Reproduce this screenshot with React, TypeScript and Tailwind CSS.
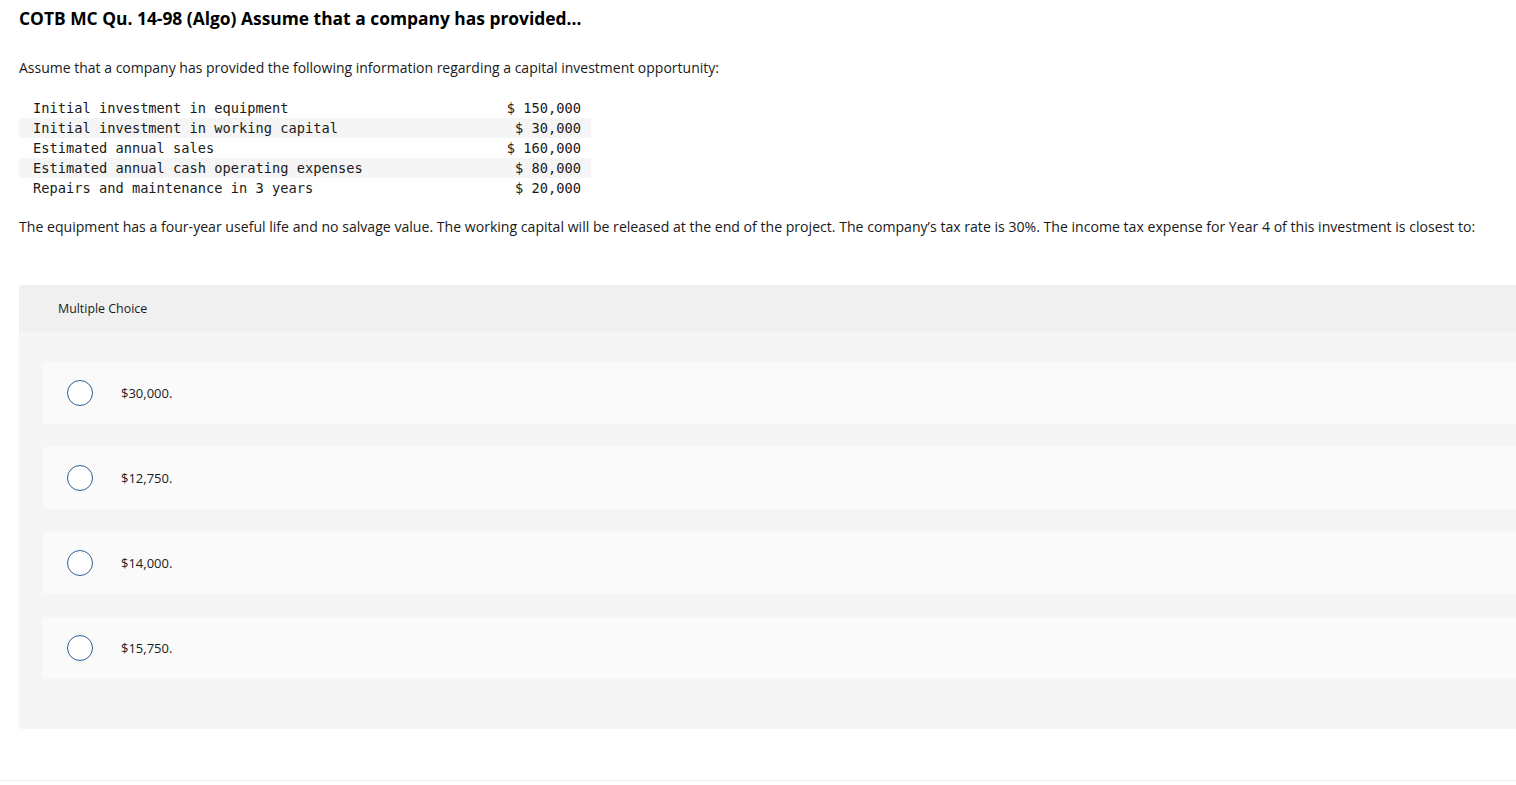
const rows = [
  { label: "Initial investment in equipment", value: "$ 150,000" },
  { label: "Initial investment in working capital", value: "$ 30,000" },
  { label: "Estimated annual sales", value: "$ 160,000" },
  { label: "Estimated annual cash operating expenses", value: "$ 80,000" },
  { label: "Repairs and maintenance in 3 years", value: "$ 20,000" },
];

const choices = ["$30,000.", "$12,750.", "$14,000.", "$15,750."];

export default function App() {
  return (
    <div className="min-h-screen bg-white text-[#1a1a1a] font-['Open_Sans',sans-serif]">
      <div className="pl-[19px]">
        <h1 className="pt-[7px] text-[17.4px] font-bold leading-[22px] text-black">
          COTB MC Qu. 14-98 (Algo) Assume that a company has provided...
        </h1>

        <p className="mt-[29px] text-[14px] leading-[20px]">
          Assume that a company has provided the following information regarding a capital investment opportunity:
        </p>

        <table className="mt-[20px] w-[572px] border-collapse font-['DejaVu_Sans_Mono',monospace] text-[13.7px]">
          <tbody>
            {rows.map((r, i) => (
              <tr key={r.label} className={i % 2 === 1 ? "bg-[#f5f5f5]" : ""}>
                <td className="h-[20px] pl-[14px] leading-[20px]">{r.label}</td>
                <td className="h-[20px] pr-[10px] text-right leading-[20px]">{r.value}</td>
              </tr>
            ))}
          </tbody>
        </table>

        <p className="mt-[19px] text-[14.1px] leading-[20px]">
          The equipment has a four-year useful life and no salvage value. The working capital will be released at the end of the project. The company’s tax rate is 30%. The income tax expense for Year 4 of this investment is closest to:
        </p>

        <div className="mt-[48px] rounded-l-[3px] bg-[#f5f5f5] pb-[50px]">
          <div className="flex h-[47px] items-center rounded-tl-[3px] bg-[#f0f0f0] pl-[39px] pt-px text-[12.4px]">
            Multiple Choice
          </div>
          <div className="flex flex-col gap-[23px] pl-[24px] pt-[30px]">
            {choices.map((c) => (
              <div
                key={c}
                className="flex h-[62px] items-center rounded-l-[3px] bg-[#fafafa] pl-[24px]"
              >
                <span className="h-[26px] w-[26px] rounded-full border-[1.5px] border-[#2d5f93] bg-white" />
                <span className="ml-[28px] pt-px text-[13px]">{c}</span>
              </div>
            ))}
          </div>
        </div>
      </div>
      <div className="mt-[51px] h-px bg-[#efefef]" />
    </div>
  );
}
